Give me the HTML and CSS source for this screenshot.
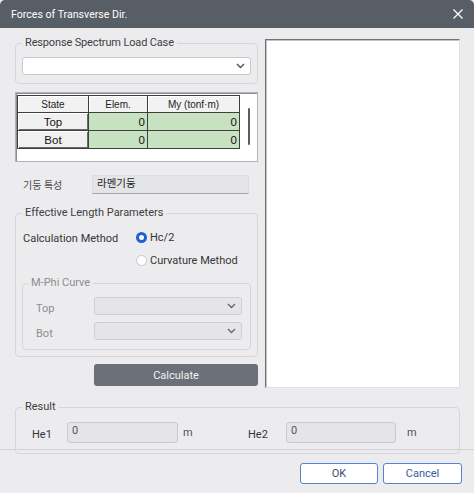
FILE: index.html
```html
<!DOCTYPE html>
<html>
<head>
<meta charset="utf-8">
<link rel="stylesheet" href="styles.css">
</head>
<body>
<div class="window">
  <div class="titlebar">
    <span class="title">Forces of Transverse Dir.</span>
    <svg class="close" width="10" height="10" viewBox="0 0 10 10"><path d="M0.5 0.5 L9.5 9.5 M9.5 0.5 L0.5 9.5" stroke="#ffffff" stroke-width="1.3" fill="none"/></svg>
  </div>
  <div class="content">
    <div class="main">
      <div class="left">
        <fieldset class="grp rs">
          <legend>Response Spectrum Load Case</legend>
          <div class="select">
            <svg width="9" height="6" viewBox="0 0 9 6"><polyline points="1,1 4.5,4.5 8,1" stroke="#555" stroke-width="1.4" fill="none"/></svg>
          </div>
        </fieldset>
        <div class="tablebox">
          <div class="grid">
            <div class="hd">State</div>
            <div class="hd">Elem.</div>
            <div class="hd">My (tonf·m)</div>
            <div class="rh">Top</div>
            <div class="val">0</div>
            <div class="val">0</div>
            <div class="rh">Bot</div>
            <div class="val">0</div>
            <div class="val">0</div>
          </div>
          <div class="scroll"></div>
        </div>
        <div class="kd">
          <span class="kd-label">기둥 특성</span>
          <div class="kd-input">라멘기둥</div>
        </div>
        <fieldset class="grp elp">
          <legend>Effective Length Parameters</legend>
          <div class="calc-row">
            <span class="calc-label">Calculation Method</span>
            <div class="radios">
              <div class="radio"><span class="dot on"></span><span>Hc/2</span></div>
              <div class="radio"><span class="dot"></span><span>Curvature Method</span></div>
            </div>
          </div>
          <fieldset class="grp mphi">
            <legend>M-Phi Curve</legend>
            <div class="mrow">
              <span class="mlabel">Top</span>
              <div class="select dis">
                <svg width="9" height="6" viewBox="0 0 9 6"><polyline points="1,1 4.5,4.5 8,1" stroke="#6a6a6a" stroke-width="1.4" fill="none"/></svg>
              </div>
            </div>
            <div class="mrow">
              <span class="mlabel">Bot</span>
              <div class="select dis">
                <svg width="9" height="6" viewBox="0 0 9 6"><polyline points="1,1 4.5,4.5 8,1" stroke="#6a6a6a" stroke-width="1.4" fill="none"/></svg>
              </div>
            </div>
          </fieldset>
        </fieldset>
        <button class="calc">Calculate</button>
      </div>
      <div class="preview"></div>
    </div>
    <fieldset class="grp result">
      <legend>Result</legend>
      <div class="rrow">
        <span class="rlabel he1">He1</span>
        <div class="rinput w1">0</div>
        <span class="unit u1">m</span>
        <span class="rlabel he2">He2</span>
        <div class="rinput w2">0</div>
        <span class="unit u2">m</span>
      </div>
    </fieldset>
  </div>
  <div class="footer">
    <button class="btn ok">OK</button>
    <button class="btn cancel">Cancel</button>
  </div>
</div>
</body>
</html>
```
FILE: styles.css
```css
* { box-sizing: border-box; }
html, body { margin: 0; padding: 0; }
body {
  width: 474px;
  height: 493px;
  overflow: hidden;
  background: #ececef;
  font-family: Roboto, "Noto Sans", "Noto Sans CJK KR", sans-serif;
  font-size: 11px;
  color: #353535;
}
.window {
  width: 474px;
  height: 493px;
  display: flex;
  flex-direction: column;
}
.titlebar {
  height: 28px;
  flex: none;
  background: #585e65;
  color: #ffffff;
  display: flex;
  align-items: center;
  justify-content: space-between;
  padding: 0 11px 0 11px;
  border-radius: 5px 5px 0 0;
}
.title { font-size: 10.6px; }
.content {
  height: 422px;
  flex: none;
  border-bottom: 1px solid #d2d2d6;
  padding: 8px 14px 0 15px;
}
.main {
  display: flex;
  align-items: flex-start;
  gap: 7px;
}
.left {
  width: 243px;
  display: flex;
  flex-direction: column;
}
.preview {
  width: 195px;
  height: 349px;
  margin-top: 3px;
  background: #ffffff;
  border: 1px solid;
  border-color: #727272 #e0e0e3 #e0e0e3 #727272;
  box-shadow: inset 1px 1px 0 #c4c4c8;
}
.grp {
  margin: 0;
  min-width: 0;
  border: 1px solid #d6d6da;
  border-radius: 4px;
}
.grp legend {
  padding: 0 3px;
  margin-left: 0;
  line-height: 14px;
  font-size: 11px;
  color: #3e3e3e;
}
.rs { padding: 7px 6px 8px 6px; }
.rs legend { letter-spacing: -0.15px; }
.select {
  height: 18px;
  background: #ffffff;
  border: 1px solid #c9c9cd;
  border-radius: 3px;
  display: flex;
  align-items: center;
  justify-content: flex-end;
  padding-right: 5px;
}
.select.dis {
  background: #e5e5e8;
  border-color: #cfcfd3;
}
.tablebox {
  margin-top: 8px;
  height: 70px;
  background: #ffffff;
  border: 1px solid #b3b3b7;
  box-shadow: inset 1px 1px 0 #8e8e8e;
  padding: 2px 0 0 1px;
  display: flex;
  align-items: flex-start;
}
.grid {
  display: grid;
  grid-template-columns: 70px 58px 91px;
  grid-template-rows: 16px 17px 17px;
  gap: 1px;
  padding: 1px;
  background: #3e3e3e;
  font-family: "Liberation Sans", Arial, sans-serif;
}
.hd {
  background: #f2f2f2;
  box-shadow: inset 1px 1px 0 #ffffff;
  font-size: 10px;
  display: flex;
  align-items: center;
  justify-content: center;
  color: #222;
}
.rh {
  background: #f0f0f0;
  box-shadow: inset 1px 1px 0 #ffffff, inset -1px -1px 0 #6a6a6a;
  font-size: 11.5px;
  display: flex;
  align-items: center;
  justify-content: center;
  color: #111;
}
.val {
  background: #c6e2c1;
  font-size: 11.5px;
  display: flex;
  align-items: center;
  justify-content: flex-end;
  padding-right: 2px;
  color: #111;
}
.scroll {
  width: 2px;
  height: 37px;
  margin: 13px 0 0 8px;
  background: #5c5c5c;
  border-radius: 1px;
}
.kd {
  margin-top: 13px;
  display: flex;
  align-items: flex-start;
  padding-left: 8px;
}
.kd-label {
  width: 69px;
  font-size: 10px;
  padding-top: 4px;
  line-height: 14px;
  color: #4a4a4a;
}
.kd-input {
  width: 157px;
  height: 19px;
  background: #e4e4e7;
  border: 1px solid #dcdce0;
  border-bottom-color: #a5a5aa;
  font-size: 10.5px;
  line-height: 14px;
  padding: 1px 0 0 4px;
  color: #222;
}
.elp {
  margin-top: 12px;
  padding: 9px 6px 6px 6px;
}
.calc-row { display: flex; }
.calc-label {
  width: 114px;
  padding-left: 1px;
  padding-top: 2px;
  line-height: 16px;
}
.radios {
  display: flex;
  flex-direction: column;
  gap: 7px;
}
.radio {
  display: flex;
  align-items: center;
  gap: 3px;
  height: 16px;
}
.dot {
  width: 11px;
  height: 11px;
  border-radius: 50%;
  background: #ffffff;
  border: 1px solid #c8c8cc;
}
.dot.on {
  border: 3px solid #1f5fd4;
}
.mphi {
  margin-top: 8px;
  padding: 7px 8px 9px 13px;
}
.mphi legend {
  margin-left: -8px;
  color: #8c8c8c;
}
.mrow {
  display: flex;
  align-items: flex-start;
}
.mrow + .mrow { margin-top: 7px; }
.mlabel {
  width: 58px;
  padding-top: 6px;
  line-height: 12px;
  color: #8e8e8e;
}
.mrow .select { flex: 1; }
.calc {
  margin: 7px 0 0 79px;
  width: 164px;
  height: 22px;
  border: none;
  border-radius: 3px;
  background: #6b7079;
  color: #f2f2f2;
  font-family: inherit;
  font-size: 11px;
  padding: 0;
}
.result {
  margin-top: 12px;
  padding: 8px 0 10px 16px;
}
.result legend { margin-left: -10px; }
.rrow {
  display: flex;
  align-items: flex-start;
}
.rlabel {
  padding-top: 6px;
  line-height: 14px;
}
.he1 { width: 35px; }
.he2 { width: 38px; }
.rinput {
  height: 21px;
  background: #e5e5e8;
  border: 1px solid #cacace;
  border-radius: 3px;
  padding: 1px 0 0 4px;
  line-height: 14px;
  color: #555;
}
.w1 { width: 111px; }
.w2 { width: 110px; }
.unit {
  padding-top: 4px;
  line-height: 14px;
  color: #555;
}
.u1 { margin-left: 5px; width: 65px; }
.u2 { margin-left: 11px; }
.footer {
  flex: 1;
  display: flex;
  justify-content: flex-end;
  align-items: flex-start;
  gap: 5px;
  padding: 13px 12px 0 0;
}
.btn {
  height: 21px;
  border: 1px solid #5283d8;
  border-radius: 3px;
  background: #ffffff;
  font-family: inherit;
  font-size: 11px;
  padding: 0;
}
.ok { width: 78px; color: #3d4d6e; }
.cancel { width: 79px; color: #3b5a9a; }
```
